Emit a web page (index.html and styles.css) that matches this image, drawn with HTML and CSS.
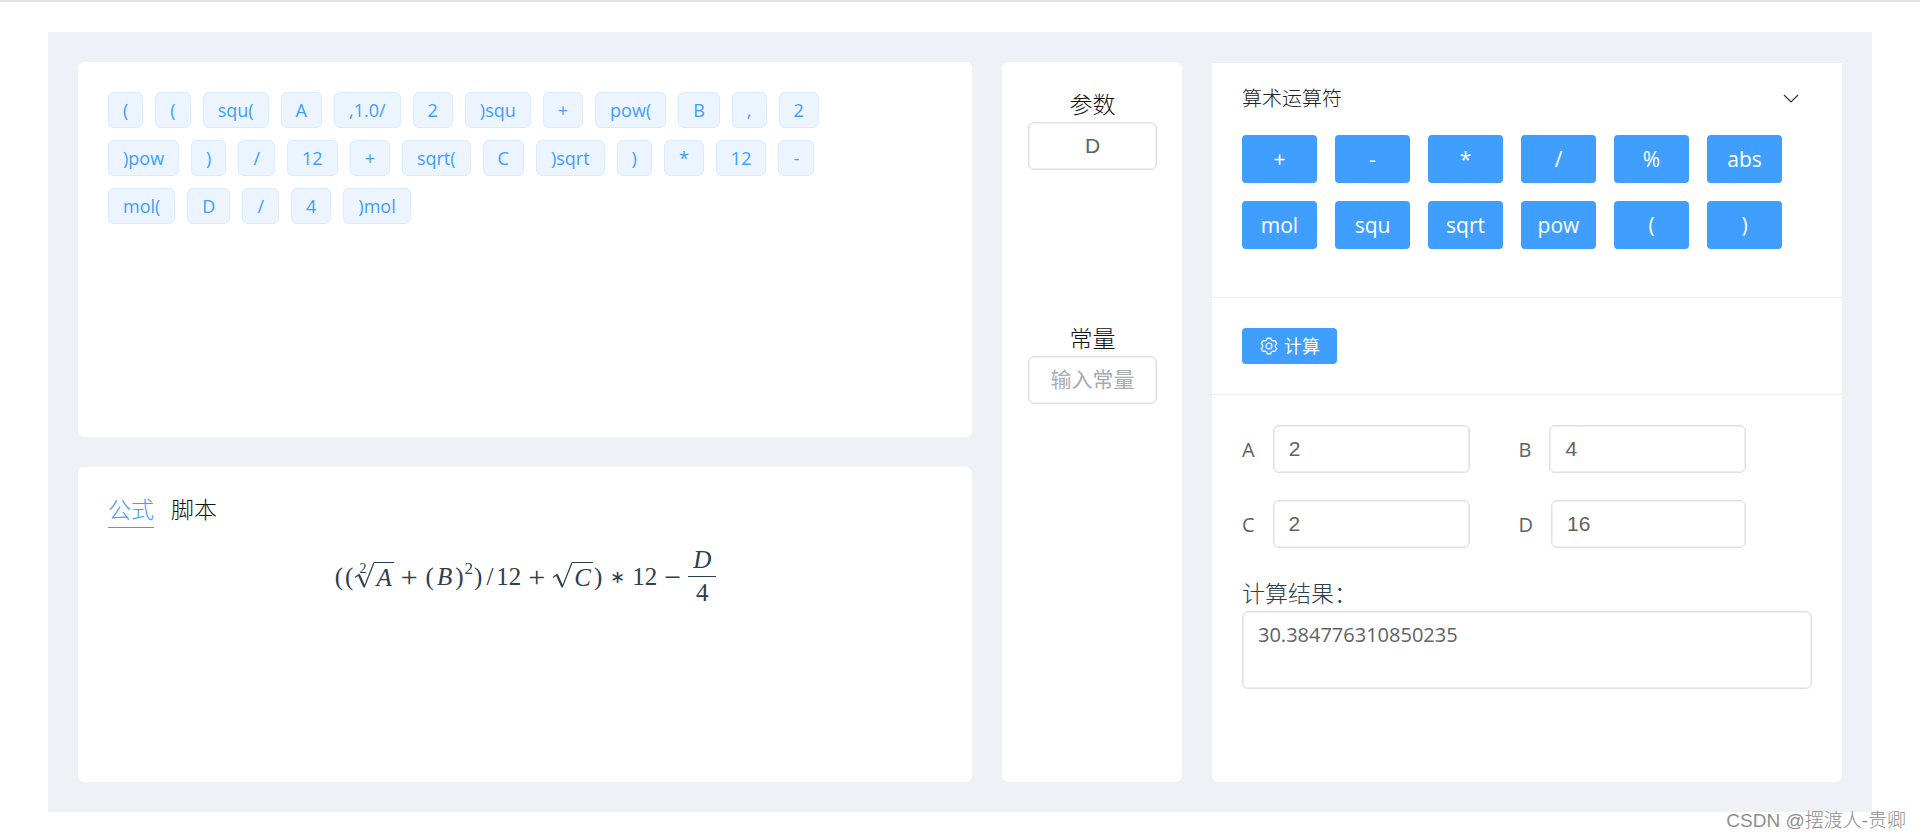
FILE: index.html
```
<!DOCTYPE html>
<html lang="zh-CN">
<head>
    <meta charset="UTF-8">
    <meta name="viewport" content="width=device-width, initial-scale=1.0">
    <title>公式编辑器</title>
    <link rel="stylesheet" href="styles.css">
</head>
<body>
    <main class="container">
        <div class="left">
            <div class="card tags">
                <span class="tag">(</span>
                <span class="tag">(</span>
                <span class="tag">squ(</span>
                <span class="tag">A</span>
                <span class="tag">,1.0/</span>
                <span class="tag">2</span>
                <span class="tag">)squ</span>
                <span class="tag">+</span>
                <span class="tag">pow(</span>
                <span class="tag">B</span>
                <span class="tag">,</span>
                <span class="tag">2</span>
                <span class="tag">)pow</span>
                <span class="tag">)</span>
                <span class="tag">/</span>
                <span class="tag">12</span>
                <span class="tag">+</span>
                <span class="tag">sqrt(</span>
                <span class="tag">C</span>
                <span class="tag">)sqrt</span>
                <span class="tag">)</span>
                <span class="tag">*</span>
                <span class="tag">12</span>
                <span class="tag">-</span>
                <span class="tag">mol(</span>
                <span class="tag">D</span>
                <span class="tag">/</span>
                <span class="tag">4</span>
                <span class="tag">)mol</span>
            </div>
            <div class="card result">
                <nav class="tabs">
                    <a href="#" class="tab on">公式</a>
                    <a href="#" class="tab">脚本</a>
                </nav>
                <div class="formula">
                    <span class="paren">(</span>
                    <span class="paren">(</span>
                    <span class="root">
                        <span class="degree">2</span>
                        <svg class="surd" width="20" height="27" viewBox="0 0 20 27"><path d="M1 15.5L5 12.5L10.5 24.5L20 .5" fill="none" stroke="#2c3e50" stroke-width="1.2"/><path d="M4 13.5L9.5 25.5L10.8 23.5L6 12.5z" fill="#2c3e50"/></svg>
                        <i class="radicand">A</i>
                    </span>
                    <span class="op">+</span>
                    <span class="paren">(</span>
                    <i class="var">B</i>
                    <span class="paren">)</span>
                    <sup>2</sup>
                    <span class="paren">)</span>
                    <span class="slash">/</span>
                    <span>12</span>
                    <span class="op">+</span>
                    <span class="root">
                        <svg class="surd" width="20" height="27" viewBox="0 0 20 27"><path d="M1 15.5L5 12.5L10.5 24.5L20 .5" fill="none" stroke="#2c3e50" stroke-width="1.2"/><path d="M4 13.5L9.5 25.5L10.8 23.5L6 12.5z" fill="#2c3e50"/></svg>
                        <i class="radicand">C</i>
                    </span>
                    <span class="paren">)</span>
                    <span class="op star">∗</span>
                    <span>12</span>
                    <span class="op">−</span>
                    <span class="frac"><i>D</i><span>4</span></span>
                </div>
            </div>
        </div>

        <div class="card middle">
            <div class="group">
                <label for="param">参数</label>
                <input type="text" id="param" value="D">
            </div>
            <div class="group">
                <label for="constant">常量</label>
                <input type="text" id="constant" placeholder="输入常量">
            </div>
        </div>

        <div class="right">
            <section class="block operators">
                <button class="header">
                    <span>算术运算符</span>
                    <svg width="16" height="10" viewBox="0 0 16 10"><path d="M1 1L8 8L15 1" fill="none" stroke="#303133" stroke-width="1.2"/></svg>
                </button>
                <div class="keys">
                    <button class="key">+</button>
                    <button class="key">-</button>
                    <button class="key">*</button>
                    <button class="key">/</button>
                    <button class="key">%</button>
                    <button class="key">abs</button>
                    <button class="key">mol</button>
                    <button class="key">squ</button>
                    <button class="key">sqrt</button>
                    <button class="key">pow</button>
                    <button class="key">(</button>
                    <button class="key">)</button>
                </div>
            </section>
            <section class="block">
                <button class="calc">
                    <svg width="18" height="18" viewBox="0 0 18 18" fill="none" stroke="#fff" stroke-width="1.2"><circle cx="9" cy="9" r="3"/><path d="M6.7 2.9L7.3 1.2H10.7L11.3 2.9Q12.2 3.7 13.2 3.9L15 3.6L16.7 6.5L15.5 7.9Q15.1 9 15.5 10.1L16.7 11.5L15 14.4L13.2 14.1Q12.2 14.3 11.3 15.1L10.7 16.8H7.3L6.7 15.1Q5.8 14.3 4.8 14.1L3 14.4L1.3 11.5L2.5 10.1Q2.9 9 2.5 7.9L1.3 6.5L3 3.6L4.8 3.9Q5.8 3.7 6.7 2.9z"/></svg>
                    <span>计算</span>
                </button>
            </section>
            <section class="block">
                <div class="values">
                    <div class="field"><label for="a">A</label><input type="text" id="a" value="2"></div>
                    <div class="field"><label for="b">B</label><input type="text" id="b" value="4"></div>
                    <div class="field"><label for="c">C</label><input type="text" id="c" value="2"></div>
                    <div class="field"><label for="d">D</label><input type="text" id="d" value="16"></div>
                </div>
                <label class="output-label" for="output">计算结果：</label>
                <textarea class="output" id="output">30.384776310850235</textarea>
            </section>
        </div>
    </main>
    <div class="watermark">CSDN @摆渡人-贵卿</div>
</body>
</html>
```
FILE: styles.css
```
*{
    margin:0;
    padding:0;
    box-sizing:border-box;
}
body{
    position:relative;
    min-height:100vh;
    padding:30px 48px 28px;
    border-top:2px solid #e1e1e1;
    background:#fff;
    color:#111;
    font-family:"Open Sans","Noto Sans CJK SC",sans-serif;
    font-size:20px;
}
button,
input,
textarea{
    font-family:inherit;
    font-size:inherit;
}
button{
    border:0;
    cursor:pointer;
}
.container{
    display:grid;
    grid-template-columns:149fr 180px 105fr;
    gap:30px;
    min-height:calc(100vh - 60px);
    padding:30px;
    background:#f0f1f6;
}
.card{
    background:#fff;
    border-radius:6px;
}

/* left */
.left{
    display:grid;
    grid-template-rows:375fr 315fr;
    gap:30px;
}
.tags{
    display:flex;
    flex-wrap:wrap;
    align-content:flex-start;
    gap:12px;
    padding:30px 90px 30px 30px;
}
.tag{
    height:36px;
    padding:0 14px;
    border:1px solid #d9ecff;
    border-radius:6px;
    background:#ebf4ff;
    color:#409eff;
    font-size:18px;
    line-height:34px;
}
.result{
    padding:28px 30px;
}
.tabs{
    display:flex;
    gap:17px;
    font-size:23px;
    font-weight:300;
    line-height:28px;
}
.tab{
    padding-bottom:4px;
    color:#111;
    text-decoration:none;
    border-bottom:1px solid transparent;
}
.tab.on{
    color:#409eff;
    border-bottom-color:#409eff;
}

/* formula */
.formula{
    display:flex;
    justify-content:center;
    align-items:center;
    margin-top:16px;
    color:#2c3e50;
    font-family:"Liberation Serif",serif;
    font-size:25px;
    line-height:28px;
}
.paren{
    padding:0 1px;
}
.root{
    display:flex;
    position:relative;
}
.surd{
    margin-top:-2px;
}
.radicand{
    height:28px;
    margin-top:-2px;
    padding:1px 2px 0;
    border-top:1px solid #2c3e50;
    line-height:28px;
}
.degree{
    position:absolute;
    left:5px;
    top:-2px;
    font-size:14px;
    line-height:14px;
}
.var{
    padding:0 2px;
}
.op{
    padding:0 7px;
    font-size:30px;
}
.op.star{
    font-size:18px;
}
.slash{
    padding:0 3px;
}
sup{
    font-size:17px;
    line-height:20px;
    align-self:flex-start;
    margin-top:15px;
}
.frac{
    display:flex;
    flex-direction:column;
    text-align:center;
    line-height:32px;
}
.frac i{
    padding:0 5px;
    border-bottom:1px solid #2c3e50;
}

/* middle */
.middle{
    padding:28px 25px 28px 26px;
}
.group{
    min-height:234px;
}
.group label{
    display:block;
    padding-bottom:4px;
    font-size:23px;
    font-weight:300;
    line-height:28px;
    text-align:center;
}
input{
    width:100%;
    height:48px;
    border:1px solid #dcdfe6;
    border-radius:6px;
    box-shadow:inset 0 0 0 1px #eeeff3;
    color:#606266;
    font-family:"Liberation Sans","Noto Sans CJK SC",sans-serif;
    font-size:21px;
}
.group input{
    text-align:center;
}
input::placeholder{
    color:#a8abb2;
    font-weight:400;
}

/* right */
.right{
    border-top:1px solid #ebeef5;
    border-radius:0 0 6px 6px;
    background:#fff;
}
.block{
    padding:30px;
    border-bottom:1px solid #ebeef5;
}
.block:last-child{
    border-bottom:0;
}
.operators{
    padding:0 30px 48px;
}
.header{
    display:flex;
    justify-content:space-between;
    align-items:center;
    width:100%;
    height:72px;
    padding-right:13px;
    background:none;
    color:#222;
    font-weight:300;
}
.header span{
    padding-bottom:4px;
}
.keys{
    display:flex;
    flex-wrap:wrap;
    gap:18px;
}
.key{
    width:75px;
    height:48px;
    border-radius:4px;
    background:#409eff;
    color:#fff;
    font-size:21px;
    font-weight:500;
}
.calc{
    display:flex;
    align-items:center;
    gap:6px;
    height:36px;
    padding:0 17px 0 18px;
    border-radius:4px;
    background:#409eff;
    color:#fff;
    font-size:18px;
}
.calc span{
    padding-bottom:2px;
}
.values{
    display:grid;
    grid-template-columns:1fr 1fr;
    gap:27px 49px;
    padding-right:66px;
}
.field{
    display:flex;
    align-items:center;
    gap:18px;
    color:#606266;
}
.field input{
    flex:1;
    min-width:0;
    padding:0 15px;
}
.output-label{
    display:block;
    margin-top:31px;
    padding-bottom:4px;
    color:#2c3e50;
    font-size:23px;
    font-weight:300;
    line-height:28px;
}
.output{
    display:block;
    width:100%;
    height:78px;
    padding:8px 15px;
    border:1px solid #dcdfe6;
    border-radius:6px;
    box-shadow:inset 0 0 0 1px #eeeff3;
    color:#606266;
    line-height:30px;
    resize:none;
}

.watermark{
    position:absolute;
    right:14px;
    bottom:4px;
    color:#8e8e8e;
    font-family:"Liberation Sans","Noto Sans CJK SC",sans-serif;
    font-size:19px;
    font-weight:300;
    line-height:30px;
    text-shadow:1px 1px 0 #fff;
}
```
